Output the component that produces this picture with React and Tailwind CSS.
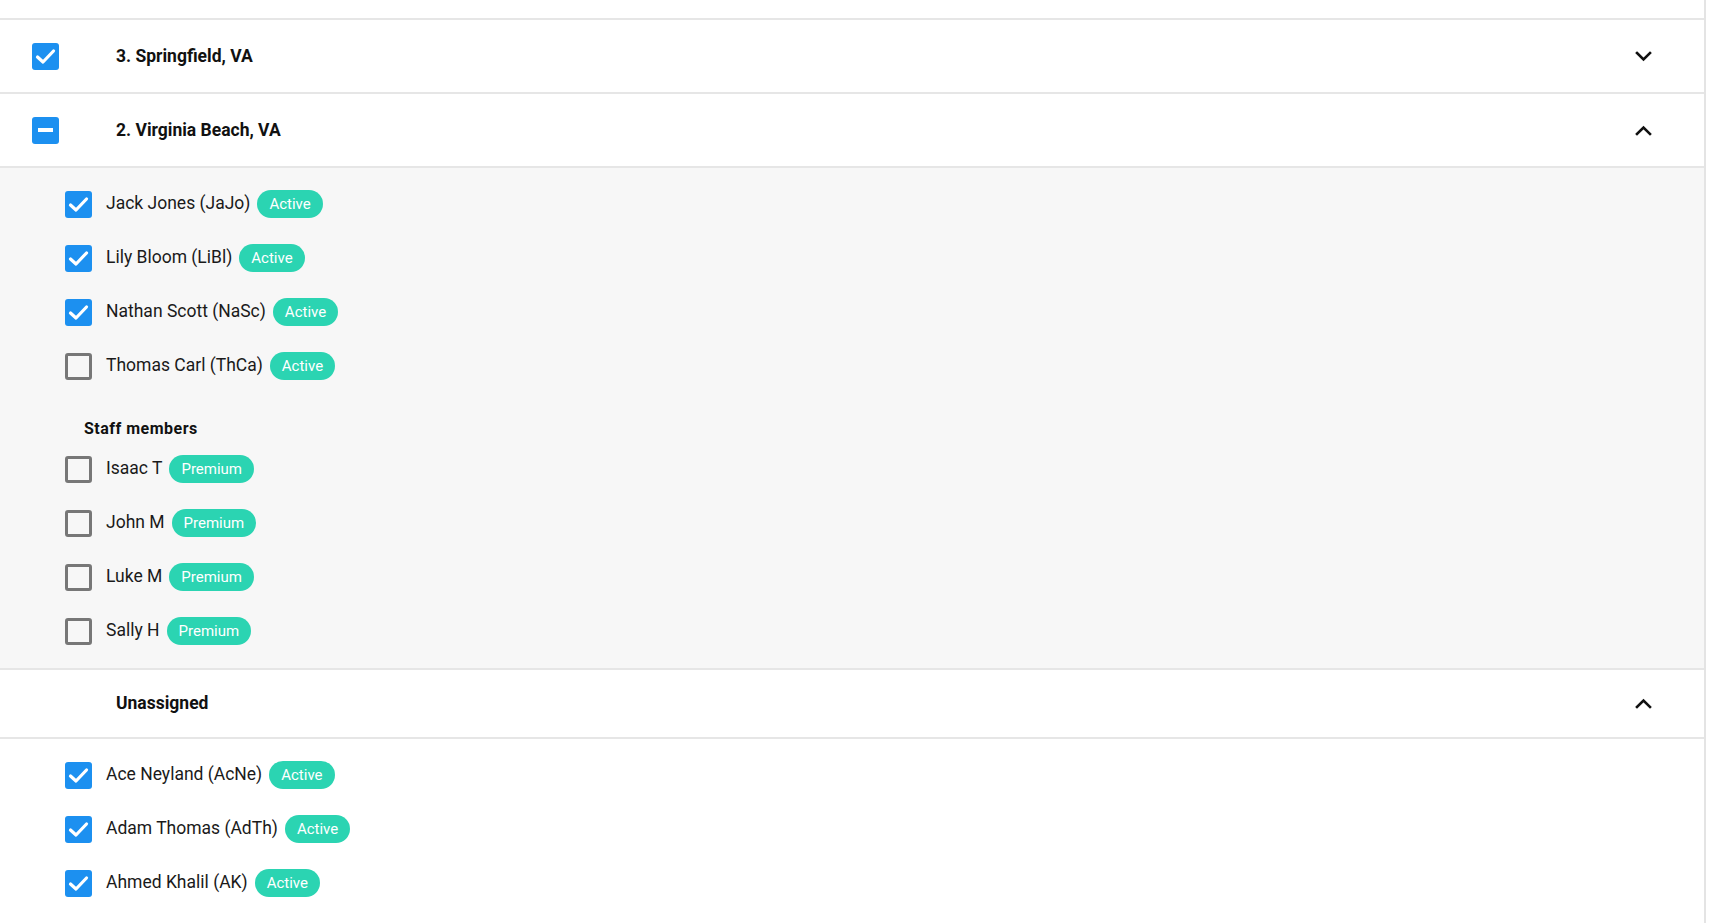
import React from "react";

const FONT = { fontFamily: "Roboto, 'Liberation Sans', sans-serif" };

function Check({ state }) {
  if (state === "checked") {
    return (
      <div className="w-[27px] h-[27px] rounded-[3px] bg-[#1c90f0] flex items-center justify-center shrink-0">
        <svg width="21" height="17" viewBox="0 0 21 17">
          <polyline points="2.5,9 8,14 18.5,3" fill="none" stroke="white" strokeWidth="3.2" strokeLinecap="round" strokeLinejoin="round" />
        </svg>
      </div>
    );
  }
  if (state === "partial") {
    return (
      <div className="w-[27px] h-[27px] rounded-[3px] bg-[#1c90f0] flex items-center justify-center shrink-0">
        <div className="w-[15px] h-[4px] bg-white" />
      </div>
    );
  }
  return <div className="w-[27px] h-[27px] rounded-[3px] border-[3px] border-[#777777] bg-[#f7f7f7] shrink-0" />;
}

function Chevron({ up }) {
  return (
    <svg width="17" height="11" viewBox="0 0 17 11" className="shrink-0">
      <polyline
        points={up ? "2,9 8.5,2.5 15,9" : "2,2 8.5,8.5 15,2"}
        fill="none"
        stroke="#111"
        strokeWidth="2.6"
        strokeLinecap="square"
      />
    </svg>
  );
}

function Header({ title, check, up, h = "h-[74px]" }) {
  return (
    <div className={`flex items-center ${h} border-b-2 border-[#e6e6e6] bg-white shrink-0`}>
      {check ? (
        <div className="pl-[32px] pr-[57px] flex items-center">
          <Check state={check} />
        </div>
      ) : (
        <div className="w-[116px]" />
      )}
      <span className="text-[17.5px] font-bold text-[#111]">{title}</span>
      <div className="ml-auto pr-[52px] flex items-center">
        <Chevron up={up} />
      </div>
    </div>
  );
}

function Item({ name, badge, state }) {
  return (
    <div className="h-[54px] flex items-center pl-[65px]">
      <Check state={state} />
      <span className="ml-[14px] text-[17.5px] text-[#1a1a1a] leading-none">{name}</span>
      <span className="ml-[7px] h-[28px] px-[12px] rounded-full bg-[#2bd4b2] text-white text-[15px] flex items-center leading-none">
        {badge}
      </span>
    </div>
  );
}

export default function App() {
  return (
    <div className="w-[1720px] h-[923px] bg-white overflow-hidden" style={FONT}>
      <div className="w-[1706px] h-full border-r-2 border-[#e4e4e4] flex flex-col">
        <div className="h-[20px] border-b-2 border-[#e6e6e6] shrink-0" />
        <Header title="3. Springfield, VA" check="checked" />
        <Header title="2. Virginia Beach, VA" check="partial" up />
        <div className="bg-[#f7f7f7] pt-[9px] pb-[10px] border-b-2 border-[#e6e6e6] shrink-0">
          <Item name="Jack Jones (JaJo)" badge="Active" state="checked" />
          <Item name="Lily Bloom (LiBl)" badge="Active" state="checked" />
          <Item name="Nathan Scott (NaSc)" badge="Active" state="checked" />
          <Item name="Thomas Carl (ThCa)" badge="Active" state="empty" />
          <div className="h-[49px] pt-[25px] pl-[84px] text-[16px] font-bold leading-[22px] tracking-[0.5px] text-[#111]">
            Staff members
          </div>
          <Item name="Isaac T" badge="Premium" state="empty" />
          <Item name="John M" badge="Premium" state="empty" />
          <Item name="Luke M" badge="Premium" state="empty" />
          <Item name="Sally H" badge="Premium" state="empty" />
        </div>
        <Header title="Unassigned" up h="h-[69px]" />
        <div className="pt-[9px]">
          <Item name="Ace Neyland (AcNe)" badge="Active" state="checked" />
          <Item name="Adam Thomas (AdTh)" badge="Active" state="checked" />
          <Item name="Ahmed Khalil (AK)" badge="Active" state="checked" />
        </div>
      </div>
    </div>
  );
}
